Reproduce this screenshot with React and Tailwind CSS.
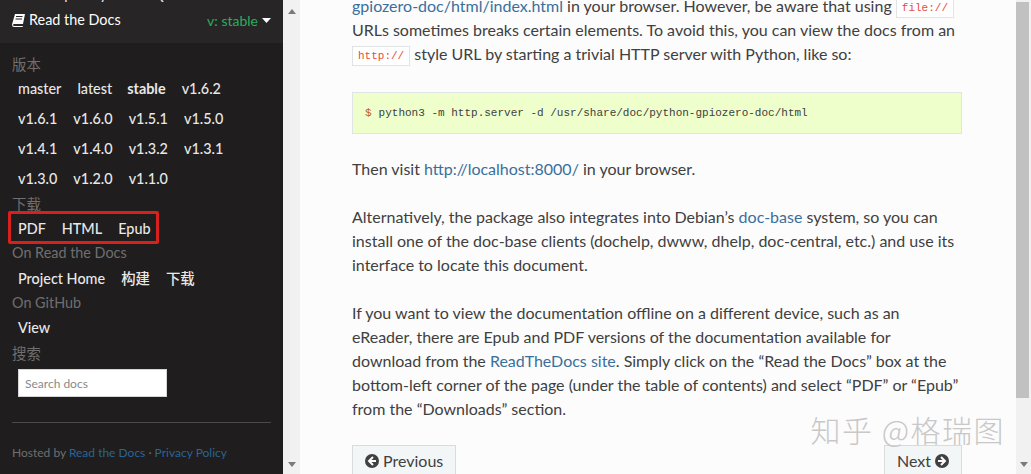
import React from "react";

const cjk = { fontFamily: 'Lato, "Noto Sans CJK SC", sans-serif' };

function Row({ items, className = "", gap = "gap-[16px]" }) {
  return (
    <div className={`flex items-center h-[30px] pl-[18px] text-[14.4px] font-medium text-[#e8e8e8] ${gap} ${className}`}>
      {items.map((t, i) => (
        <span key={i} className={t === "stable" ? "font-bold -ml-px" : ""}>{t}</span>
      ))}
    </div>
  );
}

function Heading({ children, className = "" }) {
  return <div className={`text-[14.4px] leading-[20px] text-[#6f6f6f] pl-3 ${className}`}>{children}</div>;
}

function Code({ children }) {
  return (
    <code className="inline-block h-[20px] leading-[18px] align-middle px-[5px] border border-[#e1e4e5] bg-white text-[#e74c3c] text-[11px] font-['Liberation_Mono',monospace]">
      {children}
    </code>
  );
}

function Arrow({ dir }) {
  return (
    <svg width="8" height="5" viewBox="0 0 8 5" className="shrink-0">
      <path d={dir === "up" ? "M0 5 L4 0 L8 5 Z" : "M0 0 L8 0 L4 5 Z"} fill="#7a7a7a" />
    </svg>
  );
}

function CircleArrow({ dir, className = "" }) {
  return (
    <svg width="14" height="14" viewBox="0 0 14 14" className={`shrink-0 ${className}`}>
      <circle cx="7" cy="7" r="7" fill="#404040" />
      <path
        d={dir === "left" ? "M8 3 L4 7 L8 11 M4.5 7 H11" : "M6 3 L10 7 L6 11 M9.5 7 H3"}
        stroke="#fcfcfc"
        strokeWidth="2"
        fill="none"
      />
    </svg>
  );
}

export default function App() {
  return (
    <div className="flex h-[474px] w-[1031px] overflow-hidden bg-[#fcfcfc]" style={cjk}>
      {/* sidebar */}
      <aside className="w-[283px] h-full shrink-0 bg-[#1f1d1d] flex flex-col relative overflow-hidden">
        <div className="h-[43px] shrink-0 bg-[#272525] flex items-center justify-between pl-3 pr-[12px] pb-[3px]">
          <div className="flex items-center gap-[4px] text-[#fcfcfc] text-[14.4px]">
            <svg width="13" height="14" viewBox="0 0 13 14">
              <path d="M3 1 H13 L11 11 H2 Q1 11 1 12 Q1 13 2.5 13 H11 L10.6 14 H2 Q0 14 0 11.5 Z" fill="#fcfcfc" />
              <path d="M4 3.5 H10.5 M3.6 6 H10" stroke="#272525" strokeWidth="1" />
            </svg>
            <span>Read the Docs</span>
          </div>
          <div className="flex items-center gap-[4px] text-[14px] mt-[1px]">
            <span className="text-[#27ae60]">v: stable</span>
            <svg width="9" height="5" viewBox="0 0 9 5"><path d="M0 0 H9 L4.5 5 Z" fill="#fcfcfc" /></svg>
          </div>
        </div>
        <div className="flex flex-col pt-[12px]">
          <Heading>版本</Heading>
          <Row className="mt-[-1px]" items={["master", "latest", "stable", "v1.6.2"]} />
          <Row items={["v1.6.1", "v1.6.0", "v1.5.1", "v1.5.0"]} />
          <Row items={["v1.4.1", "v1.4.0", "v1.3.2", "v1.3.1"]} />
          <Row items={["v1.3.0", "v1.2.0", "v1.1.0"]} />
          <Heading className="mt-[1px]">下载</Heading>
          <div className="ml-[8px] mt-[-4px] w-[151px] h-[33px] border-[3px] border-[#d8201c] rounded-[2px] flex items-center gap-[16px] pl-[7px] pt-[2px] text-[14.4px] font-medium text-[#e8e8e8]">
            <span>PDF</span><span>HTML</span><span>Epub</span>
          </div>
          <Heading className="mt-[-1px]">On Read the Docs</Heading>
          <Row className="mt-[1px]" items={["Project Home", "构建", "下载"]} />
          <Heading className="mt-[-1px]">On GitHub</Heading>
          <Row className="font-bold h-[28px]" items={["View"]} />
          <Heading className="mt-[1px]">搜索</Heading>
          <input
            readOnly
            placeholder="Search docs"
            className="ml-[18px] mt-[5px] w-[149px] h-[28px] bg-white px-[6px] text-[12px] text-[#444] placeholder:text-[#8a8a8a] outline-none border border-[#d5d5d5]"
          />
          <div className="mx-3 mt-[25px] h-px bg-[#4a4a4a]" />
          <div className="pl-3 mt-[21px] text-[12px] leading-[18px] text-[#6f6f6f]">
            Hosted by <span className="text-[#2a6496]">Read the Docs</span> · <span className="text-[#2a6496]">Privacy Policy</span>
          </div>
        </div>
        <div className="absolute top-[-15px] left-[24px] text-[#e8e8e8] text-[14.4px] leading-[18px]">7. Frequently Asked Questions</div>
      </aside>

      {/* sidebar scrollbar */}
      <div className="w-[17px] shrink-0 h-full bg-[#f1f1f1] flex flex-col justify-between items-center pt-[9px] pb-[7px]">
        <Arrow dir="up" />
        <Arrow dir="down" />
      </div>

      {/* content */}
      <main className="flex-1 min-w-0 h-full overflow-hidden pl-[52px] pr-[54px] text-[16px] text-[#404040] relative">
        <div className="w-[610px] leading-[24px] mt-[-6px] whitespace-nowrap">
          <p>
            <span className="text-[#3a6f9c]">gpiozero-doc/html/index.html</span> in your browser. However, be aware that using <Code>file://</Code>
            <br />URLs sometimes breaks certain elements. To avoid this, you can view the docs from an
            <br /><Code>http://</Code> style URL by starting a trivial HTTP server with Python, like so:
          </p>
          <div className="mt-[26px] h-[42px] bg-[#eeffcc] border border-[#e1e4e5] flex items-center pl-[12px] text-[11px] font-['Liberation_Mono',monospace] text-[#404040]">
            <span className="text-[#c65d09] mr-[7px]">$</span>python3 -m http.server -d /usr/share/doc/python-gpiozero-doc/html
          </div>
          <p className="mt-[23px]">
            Then visit <span className="text-[#3a6f9c]">http://localhost:8000/</span> in your browser.
          </p>
          <p className="mt-[24px]">
            Alternatively, the package also integrates into Debian’s <span className="text-[#3a6f9c]">doc-base</span> system, so you can
            <br />install one of the doc-base clients (dochelp, dwww, dhelp, doc-central, etc.) and use its
            <br />interface to locate this document.
          </p>
          <p className="mt-[24px]">
            If you want to view the documentation offline on a different device, such as an
            <br />eReader, there are Epub and PDF versions of the documentation available for
            <br />download from the <span className="text-[#3a6f9c]">ReadTheDocs site</span>. Simply click on the “Read the Docs” box at the
            <br />bottom-left corner of the page (under the table of contents) and select “PDF” or “Epub”
            <br />from the “Downloads” section.
          </p>
          <div className="flex justify-between mt-[24px]">
            <div className="h-[40px] px-3 pt-[3px] bg-[#f3f6f6] border border-[#d9dcdd] flex items-start gap-[4px] text-[16px]">
              <CircleArrow dir="left" className="mt-[5px]" />Previous
            </div>
            <div className="h-[40px] px-3 pt-[3px] bg-[#f3f6f6] border border-[#d9dcdd] flex items-start gap-[4px] text-[16px]">
              Next<CircleArrow dir="right" className="mt-[5px]" />
            </div>
          </div>
        </div>
        <div className="absolute right-[11px] top-[408px] text-[30px] leading-[42px] font-light tracking-[1.5px] text-[#c8c8c8]" style={{ fontFamily: '"Noto Sans CJK SC", sans-serif' }}>
          知乎 @格瑞图
        </div>
      </main>

      {/* page scrollbar */}
      <div className="w-[15px] shrink-0 h-full bg-[#f1f1f1] flex flex-col items-center pt-[2px] pb-[7px]">
        <div className="h-[396px] w-[13px] self-start bg-[#c1c1c1]" />
        <div className="flex-1" />
        <Arrow dir="down" />
      </div>
    </div>
  );
}
